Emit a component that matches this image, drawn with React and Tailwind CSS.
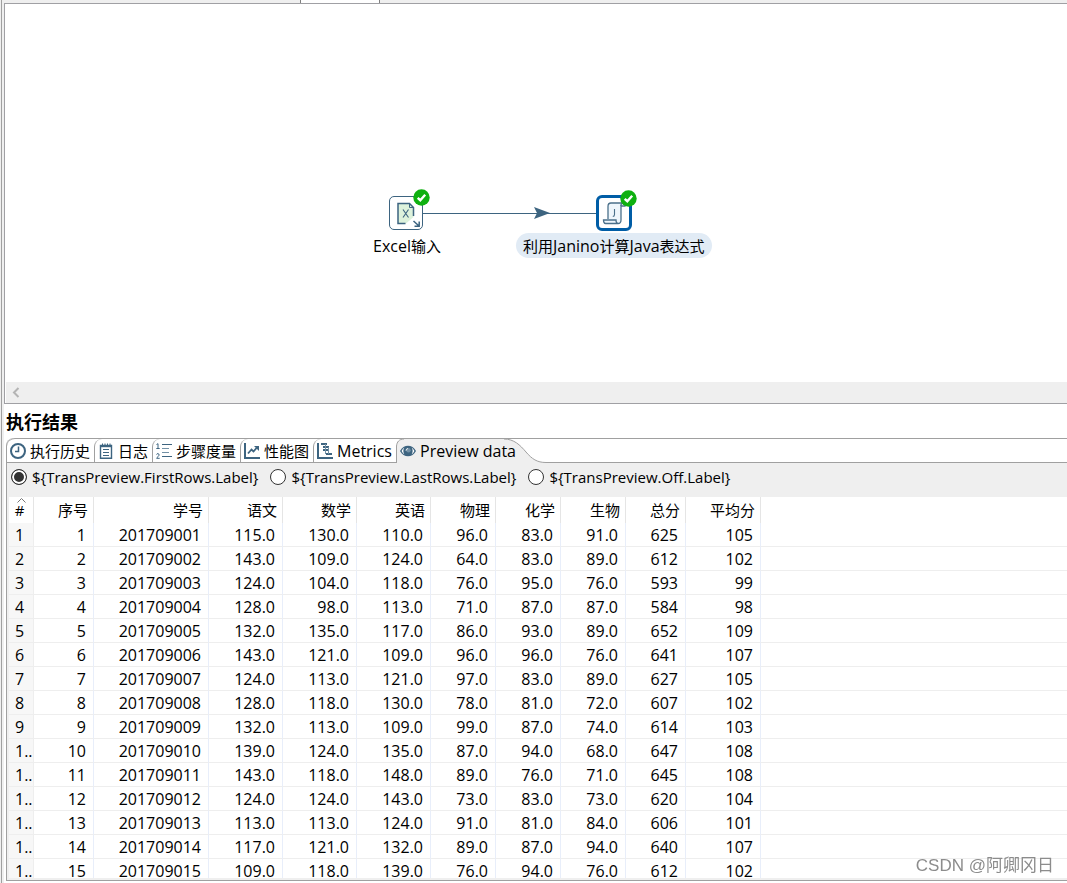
import React, { useState } from "react";

const columns = [
  { title: "序号", width: "w-[60px]" },
  { title: "学号", width: "w-[115px]" },
  { title: "语文", width: "w-[74px]" },
  { title: "数学", width: "w-[74px]" },
  { title: "英语", width: "w-[74px]" },
  { title: "物理", width: "w-[65px]" },
  { title: "化学", width: "w-[65px]" },
  { title: "生物", width: "w-[65px]" },
  { title: "总分", width: "w-[60px]" },
  { title: "平均分", width: "w-[75px]" },
];

const rows = [
  ["1", "201709001", "115.0", "130.0", "110.0", "96.0", "83.0", "91.0", "625", "105"],
  ["2", "201709002", "143.0", "109.0", "124.0", "64.0", "83.0", "89.0", "612", "102"],
  ["3", "201709003", "124.0", "104.0", "118.0", "76.0", "95.0", "76.0", "593", "99"],
  ["4", "201709004", "128.0", "98.0", "113.0", "71.0", "87.0", "87.0", "584", "98"],
  ["5", "201709005", "132.0", "135.0", "117.0", "86.0", "93.0", "89.0", "652", "109"],
  ["6", "201709006", "143.0", "121.0", "109.0", "96.0", "96.0", "76.0", "641", "107"],
  ["7", "201709007", "124.0", "113.0", "121.0", "97.0", "83.0", "89.0", "627", "105"],
  ["8", "201709008", "128.0", "118.0", "130.0", "78.0", "81.0", "72.0", "607", "102"],
  ["9", "201709009", "132.0", "113.0", "109.0", "99.0", "87.0", "74.0", "614", "103"],
  ["10", "201709010", "139.0", "124.0", "135.0", "87.0", "94.0", "68.0", "647", "108"],
  ["11", "201709011", "143.0", "118.0", "148.0", "89.0", "76.0", "71.0", "645", "108"],
  ["12", "201709012", "124.0", "124.0", "143.0", "73.0", "83.0", "73.0", "620", "104"],
  ["13", "201709013", "113.0", "113.0", "124.0", "91.0", "81.0", "84.0", "606", "101"],
  ["14", "201709014", "117.0", "121.0", "132.0", "89.0", "87.0", "94.0", "640", "107"],
  ["15", "201709015", "109.0", "118.0", "139.0", "76.0", "94.0", "76.0", "612", "102"],
];

const previewModes = [
  { id: "first", label: "${TransPreview.FirstRows.Label}" },
  { id: "last", label: "${TransPreview.LastRows.Label}" },
  { id: "off", label: "${TransPreview.Off.Label}" },
];

function ClockIcon() {
  return (
    <svg width="16" height="16" viewBox="0 0 16 16" fill="none" stroke="#3d6480">
      <circle cx="8" cy="8" r="7" strokeWidth="2" />
      <path d="M8.5 3.5V8.5H5" strokeWidth="1.5" />
    </svg>
  );
}

function LogIcon() {
  return (
    <svg width="16" height="16" viewBox="0 0 16 16" fill="none" stroke="#3d6480">
      <path d="M2.5 2.5H13.5V15.2H2.5Z" strokeWidth="1.4" />
      <path d="M2 3.2H14" strokeWidth="2" />
      <path d="M4.5 0.5V4M7 0.5V4M9.5 0.5V4M12 0.5V4" strokeWidth="1" />
      <path d="M5 6.5H11M5 9.5H11M5 12.5H11" strokeWidth="1.2" />
    </svg>
  );
}

function StepsIcon() {
  return (
    <svg width="16" height="16" viewBox="0 0 16 16" fill="none" stroke="#3d6480">
      <path d="M0.5 1.5L2 0.7V5.5M0.3 5.5H3.7" strokeWidth="1" />
      <path d="M0.5 11.5C0.8 10.2 3.3 10.3 3.1 12C3 13.2 1 14.2 0.6 15.3H3.7" strokeWidth="1" />
      <path d="M6 1.5H16M6 13.5H16" strokeWidth="1.2" />
      <path d="M6 5.5H13M6 9.5H13" stroke="#7290a5" strokeWidth="1.2" />
    </svg>
  );
}

function ChartIcon() {
  return (
    <svg width="16" height="16" viewBox="0 0 16 16" fill="none" stroke="#3d6480">
      <path d="M1 0V15H16" strokeWidth="2" />
      <path d="M4 10.5L7.5 6.5L9.5 8.5L13 4.5" strokeWidth="1.8" />
      <path d="M10 3H15V8Z" fill="#3d6480" stroke="none" />
    </svg>
  );
}

function MetricsIcon() {
  return (
    <svg width="16" height="16" viewBox="0 0 16 16" fill="none" stroke="#3d6480">
      <path d="M1 0V15H16" strokeWidth="2" />
      <path d="M4 1H10M6 4H12M6 7H11M9 11H15" strokeWidth="2" />
      <path d="M8.5 1V11M11.5 4V11" stroke="#7290a5" strokeWidth="1" />
    </svg>
  );
}

function EyeIcon() {
  return (
    <svg width="16" height="16" viewBox="0 0 16 16">
      <path d="M0 8C3.5 1 12.5 1 16 8C12.5 15 3.5 15 0 8Z" fill="#3d6480" />
      <path d="M1.6 8C2.3 6.5 3.3 5.4 4.3 4.8C3 6.8 3 9.2 4.3 11.2C3.3 10.6 2.3 9.5 1.6 8ZM14.4 8C13.7 6.5 12.7 5.4 11.7 4.8C13 6.8 13 9.2 11.7 11.2C12.7 10.6 13.7 9.5 14.4 8Z" fill="#fff" />
      <circle cx="8.5" cy="7.3" r="2.2" fill="#7290a5" />
      <path d="M8 5.5A2.2 2.2 0 0 0 6 7.7" fill="none" stroke="#fff" strokeWidth="0.9" />
    </svg>
  );
}

function DoneBadge() {
  return (
    <svg className="absolute -top-2 -right-2" width="17" height="17" viewBox="0 0 17 17">
      <circle cx="8.5" cy="8.5" r="8.2" fill="#0fb010" />
      <path d="M4.7 8.8L7.3 11.2L12.2 5.8" fill="none" stroke="#fff" strokeWidth="2.4" />
    </svg>
  );
}

function ExcelIcon() {
  return (
    <svg width="32" height="32" viewBox="0 0 32 32" fill="none" stroke="#3d6480">
      <path d="M8 6.5H19L23.5 10.5V20L16 26.5H8Z" fill="#ddf2dc" stroke="none" />
      <path d="M15.5 26.5H8V6.5H19.5L23.5 10.5V19" strokeWidth="1.5" />
      <path d="M19.5 6.5V10.5H23.5" strokeWidth="1" />
      <path d="M13 12.5L18.5 20.5M18.5 12.5L13 20.5" strokeWidth="1.1" />
      <path d="M23.5 24L29 29M29.2 24.5V29.2H24.5" strokeWidth="1.5" />
    </svg>
  );
}

function ScriptIcon() {
  return (
    <svg width="30" height="30" viewBox="0 0 30 30" fill="none" stroke="#4b708a" strokeWidth="1.3">
      <path d="M9 21V8.5C9 6 10 5 12 5H24C25.5 5 26 6.5 26 8H22V22C22 24.5 21 25.5 19 25.5H6.5C5 25.5 4.5 24 4.5 22H17C17 24 17.5 25.5 19 25.5" fill="#eef6fc" />
      <path d="M22 8C21.8 6.5 22.5 5 24 5" />
      <path d="M15.5 11V16.5C15.5 18 14.8 18.5 13.8 18.5" strokeWidth="1.1" />
    </svg>
  );
}

const tabs = [
  { title: "执行历史", icon: <ClockIcon />, width: "w-[87px]", size: "text-[15px]" },
  { title: "日志", icon: <LogIcon />, width: "w-[58px]", size: "text-[15px]" },
  { title: "步骤度量", icon: <StepsIcon />, width: "w-[88px]", size: "text-[15px]" },
  { title: "性能图", icon: <ChartIcon />, width: "w-[73px]", size: "text-[15px]" },
  { title: "Metrics", icon: <MetricsIcon />, width: "w-[83px]", size: "text-[16px]" },
];

function Canvas() {
  return (
    <div className="h-[401px] shrink-0 flex flex-col bg-white border border-r-0 border-[#a0a0a4]">
      <div className="relative flex-1 overflow-hidden">
        <svg className="absolute left-[418px] top-[202px]" width="174" height="14" viewBox="0 0 174 14">
          <path d="M0 7.5H174" stroke="#3d6480" strokeWidth="1" />
          <path d="M111 1L127 7L111 13L114 7Z" fill="#3d6480" />
        </svg>

        <div className="absolute left-[384px] top-[192px] size-[34px] flex items-center justify-center bg-white border border-[#3d6480] rounded-[5px]">
          <ExcelIcon />
          <DoneBadge />
        </div>
        <span className="absolute left-[368px] top-[229px] leading-[27px] text-[16px] whitespace-nowrap">
          Excel<span className="text-[15px]">输入</span>
        </span>

        <div className="absolute left-[591px] top-[191px] size-[36px] flex items-center justify-center bg-white border-3 border-[#005da6] rounded-[6px]">
          <ScriptIcon />
          <DoneBadge />
        </div>
        <span className="absolute left-[511px] top-[229px] h-[25px] px-[7px] leading-[27px] text-[16px] rounded-full bg-[#e1ebf5] whitespace-nowrap">
          <span className="text-[15px]">利用</span>Janino<span className="text-[15px]">计算</span>Java
          <span className="text-[15px]">表达式</span>
        </span>
      </div>
      <div className="h-[21px] ml-px bg-[#efefef] flex items-center pl-[6px]">
        <button aria-label="Scroll left">
          <svg width="8" height="11" viewBox="0 0 8 11" fill="none" stroke="#b4b4b4" strokeWidth="2">
            <path d="M6.5 1L2 5.5L6.5 10" />
          </svg>
        </button>
      </div>
    </div>
  );
}

function TabBar() {
  return (
    <div className="h-[25px] shrink-0 flex border-t border-[#a0a0a0] rounded-tl-[8px]">
      {tabs.map((tab) => (
        <button
          key={tab.title}
          className={`${tab.width} ${tab.size} h-[24px] shrink-0 flex items-center gap-1 pl-[3px] border-l border-b border-[#a0a0a0] rounded-tl-[8px] leading-[24px] whitespace-nowrap first:border-l-0`}
        >
          <span className="shrink-0">{tab.icon}</span>
          {tab.title}
        </button>
      ))}
      <button className="relative w-[150px] h-[24px] shrink-0 flex items-center gap-1 pl-[4px] text-[16px] leading-[24px] whitespace-nowrap">
        <svg className="absolute left-0 top-0" width="150" height="24" viewBox="0 0 150 24">
          <path d="M0 24V7C1 3 3 0 8 0H108C118 0 124 6 130 13C136 20 141 23.5 150 23.5V24Z" fill="#efefef" />
          <path d="M0.5 24V7C1 3 3 0 8 0M108 0C118 0 124 6 130 13C136 20 141 23.5 150 23.5" fill="none" stroke="#a0a0a0" />
        </svg>
        <span className="relative">
          <EyeIcon />
        </span>
        <span className="relative">Preview data</span>
      </button>
      <div className="flex-1 border-b border-[#a0a0a0]"></div>
    </div>
  );
}

function DataTable() {
  return (
    <div className="flex-1 min-h-0 overflow-hidden bg-white">
      <table className="w-full table-fixed border-separate border-spacing-0 text-right text-[16px]">
        <thead>
          <tr className="h-[26px] text-[15px] leading-[25px]">
            <th className="w-[25px] p-0 relative border-r border-[#e5e5e5] font-normal text-center">
              <svg className="absolute left-2 top-px" width="9" height="5" viewBox="0 0 9 5" fill="none" stroke="#777">
                <path d="M0.5 4.5L4.5 0.5L8.5 4.5" />
              </svg>
              <span className="pr-[3px]">#</span>
            </th>
            {columns.map((col) => (
              <th key={col.title} className={`${col.width} p-0 pr-[5px] border-r border-[#e5e5e5] font-normal`}>
                {col.title}
              </th>
            ))}
            <th className="p-0"></th>
          </tr>
        </thead>
        <tbody>
          {rows.map((row, i) => (
            <tr key={row[0]} className="h-[24px] leading-[21px]">
              <td className="p-0 pt-[2px] pl-[6px] bg-[#f7f7f7] border-r border-b border-[#eeeeee] text-left">
                {i < 9 ? row[0] : "1.."}
              </td>
              {row.map((value, j) => (
                <td key={j} className="p-0 pt-[2px] pr-[7px] border-r border-r-[#e8eefa] border-b border-b-[#eeeeee]">
                  {value}
                </td>
              ))}
              <td className="p-0 border-b border-[#eeeeee]"></td>
            </tr>
          ))}
        </tbody>
      </table>
    </div>
  );
}

export default function App() {
  const [mode, setMode] = useState("first");

  return (
    <div className="h-screen flex bg-white text-black text-[15px] font-['Open_Sans','Noto_Sans_CJK_SC',sans-serif] overflow-hidden">
      <div className="w-[4px] shrink-0 pl-px bg-[#efefef]">
        <div className="w-px h-full bg-[#a0a0a0]"></div>
      </div>

      <div className="flex-1 min-w-0 flex flex-col">
        <div className="h-[3px] shrink-0 bg-[#efefef] pl-[296px]">
          <div className="w-[80px] h-full bg-white border-x border-[#808080]"></div>
        </div>
        <Canvas />

        <h2 className="h-[34px] shrink-0 pl-[2px] text-[18px] leading-[36px] font-bold">执行结果</h2>

        <div className="flex-1 min-h-0 flex flex-col ml-[2px] mb-[2px] border-l border-b border-[#a0a0a0] rounded-tl-[8px]">
          <TabBar />
          <div className="h-[34px] shrink-0 flex gap-3 pl-[4px] pb-[6px] bg-[#efefef]">
            {previewModes.map((item) => (
              <label key={item.id} className="flex items-center gap-[5px] text-[15px] whitespace-nowrap">
                <input
                  type="radio"
                  name="preview-mode"
                  checked={mode === item.id}
                  onChange={() => setMode(item.id)}
                  className="appearance-none size-4 shrink-0 rounded-full border border-[#333] bg-white checked:bg-[#333] checked:shadow-[inset_0_0_0_2px_#fff]"
                />
                {item.label}
              </label>
            ))}
          </div>
          <div className="flex-1 min-h-0 flex pl-[2px] pb-[2px] bg-[#efefef]">
            <DataTable />
          </div>
        </div>
      </div>

      <div className="fixed right-[13px] bottom-[5px] text-[17px] leading-[24px] text-[#8c8c8c] font-['Liberation_Sans','Noto_Sans_CJK_SC',sans-serif]">
        CSDN @阿卿冈日
      </div>
    </div>
  );
}
